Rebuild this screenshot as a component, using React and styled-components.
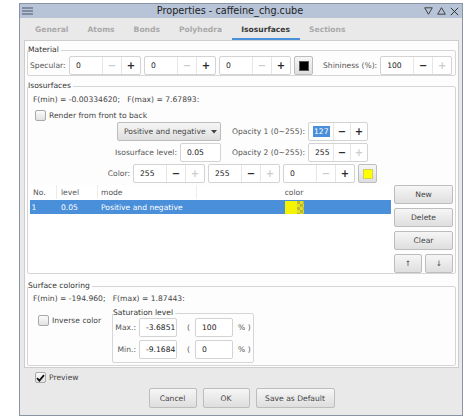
import React from 'react';
import styled, { createGlobalStyle } from 'styled-components';

const GlobalStyle = createGlobalStyle`
  html, body { margin: 0; background: #fff; }
  body {
    font-family: "DejaVu Sans", "Liberation Sans", sans-serif;
    font-size: 7.6px;
    color: #333;
  }
  * { box-sizing: border-box; }
`;

const Page = styled.div`
  padding: 3px 0 0 19px;
`;

const Window = styled.div`
  width: 444px;
  height: 413px;
  border: 1px solid #8a94a5;
  background: #e9e9e9;
  display: flex;
  flex-direction: column;
`;

const TitleBar = styled.div`
  height: 14px;
  background: #b7c3d6;
  display: flex;
  align-items: center;
`;

const MenuIcon = styled.div`
  width: 16px;
  padding-left: 2px;
  display: flex;
  align-items: center;
`;

const Title = styled.div`
  flex: 1;
  text-align: center;
  font-size: 9.7px;
  color: #1e1e1e;
  line-height: 14px;
`;

const TitleButtons = styled.div`
  display: flex;
  align-items: center;
  gap: 4px;
  padding-right: 3px;
`;

const Body = styled.div`
  flex: 1;
  display: flex;
  flex-direction: column;
  padding: 0 3px 0 4px;
`;

const TabBar = styled.div`
  height: 22px;
  display: flex;
  padding-left: 1.5px;
`;

const Tab = styled.div`
  padding: 0 9.5px;
  display: flex;
  align-items: center;
  font-weight: bold;
  color: ${p => (p.$active ? '#3a3a3a' : '#a9a9a9')};
  border-bottom: 2px solid ${p => (p.$active ? '#4a90d9' : 'transparent')};
  padding-top: 2px;
`;

const Pane = styled.div`
  height: 328px;
  border: 1px solid #cdcdcd;
  background: #fdfdfd;
  padding: 4px 2px 0 2px;
`;

const Group = styled.fieldset`
  margin: ${p => p.$top || 0}px 0 0 0;
  padding: 0 0 ${p => p.$bottom || 0}px 0;
  border: 1px solid #d6d6d6;
  border-radius: 2px;
  min-width: 0;
  width: ${p => (p.$width ? p.$width + 'px' : 'auto')};
`;

const Legend = styled.legend`
  padding: 0 2px 0 0;
  line-height: 10px;
  color: #333;
`;

const Row = styled.div`
  display: flex;
  align-items: center;
  height: 19px;
  gap: ${p => p.$gap || 0}px;
  margin: ${p => p.$mt || 0}px 0 0 ${p => p.$ml || 0}px;
`;

const Label = styled.span`
  color: #555;
  white-space: nowrap;
  width: ${p => (p.$width ? p.$width + 'px' : 'auto')};
  text-align: ${p => (p.$right ? 'right' : 'left')};
  margin-left: ${p => p.$ml || 0}px;
  flex-shrink: 0;
`;

const InfoLine = styled.div`
  height: 10px;
  line-height: 10px;
  margin: ${p => p.$mt || 0}px 0 0 5px;
  color: #444;
  white-space: pre;
`;

const Spin = styled.div`
  width: ${p => p.$width}px;
  height: 19px;
  border: 1px solid #d3d3d3;
  border-radius: 2px;
  background: #fff;
  display: flex;
  flex-shrink: 0;
  margin-left: ${p => p.$ml || 0}px;
`;

const SpinField = styled.div`
  flex: 1;
  display: flex;
  align-items: center;
  padding-left: ${p => p.$pad || 6}px;
  color: #222;
`;

const SpinBtn = styled.div`
  width: ${p => p.$w}px;
  border-left: 1px solid #e6e6e6;
  display: flex;
  align-items: center;
  justify-content: center;
  font-size: 10px;
  font-weight: bold;
  color: ${p => (p.$off ? '#cdcdcd' : '#2a2a2a')};
`;

const Selected = styled.span`
  background: #4a8fd9;
  color: #fff;
  padding: 1px 1px;
`;

const LineEdit = styled.div`
  width: ${p => p.$width}px;
  height: 19px;
  border: 1px solid #d3d3d3;
  border-radius: 2px;
  background: #fff;
  display: flex;
  align-items: center;
  padding-left: 6px;
  color: #222;
  flex-shrink: 0;
  margin-left: ${p => p.$ml || 0}px;
`;

const Button = styled.div`
  width: ${p => (p.$width ? p.$width + 'px' : 'auto')};
  height: ${p => p.$height || 19}px;
  border: 1px solid #bdbdbd;
  border-radius: 2px;
  background: linear-gradient(#f6f6f6, #dedede);
  display: flex;
  align-items: center;
  justify-content: ${p => (p.$start ? 'flex-start' : 'center')};
  padding-left: ${p => (p.$start ? 6 : 0)}px;
  color: #444;
  flex-shrink: 0;
`;

const Swatch = styled.div`
  width: 10px;
  height: 10px;
  background: ${p => p.$color};
  border: 1px solid ${p => (p.$color === '#000' ? '#555' : '#d0d060')};
`;

const Caret = styled.svg`
  margin-left: 5px;
`;

const LeftCell = styled.div`
  width: ${p => p.$width}px;
  display: flex;
  align-items: center;
  justify-content: flex-end;
  gap: 3px;
  flex-shrink: 0;
`;

const CheckRow = styled.div`
  display: flex;
  align-items: center;
  gap: 3px;
  height: 11px;
  margin: ${p => p.$mt || 0}px 0 0 ${p => p.$ml || 0}px;
  color: #444;
`;

const Box = styled.div`
  width: 11px;
  height: 11px;
  border: 1px solid #a9a9a9;
  border-radius: 2px;
  background: linear-gradient(#fbfbfb, #e2e2e2);
  display: flex;
  align-items: center;
  justify-content: center;
`;

const TableArea = styled.div`
  display: flex;
  gap: 3px;
  margin: 2px 2px 0 2px;
  height: 88px;
`;

const Table = styled.div`
  flex: 1;
  background: #fff;
`;

const TRow = styled.div`
  display: flex;
  height: 14px;
  background: ${p => (p.$selected ? '#4a8fd9' : 'transparent')};
  color: ${p => (p.$selected ? '#fff' : '#555')};
  margin-bottom: ${p => (p.$selected ? 0 : 1)}px;
`;

const TCell = styled.div`
  width: ${p => (p.$width ? p.$width + 'px' : 'auto')};
  flex: ${p => (p.$width ? 'none' : 1)};
  display: flex;
  align-items: center;
  justify-content: ${p => (p.$center ? 'center' : 'flex-start')};
  padding-left: ${p => (p.$center ? 0 : p.$pad || 3)}px;
  border-right: ${p => (p.$sep ? '1px solid #ececec' : 'none')};
`;

const ColorCell = styled.div`
  width: 19px;
  height: 13px;
  background:
    linear-gradient(90deg, #f4f400 0 62%, transparent 62%),
    repeating-conic-gradient(#e0e020 0 25%, #b8b840 0 50%) 0 0 / 6px 6px;
`;

const SideButtons = styled.div`
  width: 59px;
  display: flex;
  flex-direction: column;
  gap: 4px;
`;

const ArrowRow = styled.div`
  display: flex;
  gap: 3px;
`;

const SurfaceRow = styled.div`
  display: flex;
`;

const InverseCol = styled.div`
  width: 84px;
  padding-top: 11px;
`;

const Paren = styled.span`
  width: 18px;
  text-align: right;
  padding-right: 5px;
  color: #555;
`;

const Footer = styled.div`
  display: flex;
  justify-content: center;
  gap: 6px;
  margin-top: 5px;
`;

const Check = () => (
  <svg width="9" height="8" viewBox="0 0 9 8">
    <path d="M1 4.2 L3.4 6.6 L8 1.2" fill="none" stroke="#111" strokeWidth="1.8" />
  </svg>
);

const SpinBox = ({ value, width = 72, btn = 19, minusOff, plusOff, selected, ml }) => (
  <Spin $width={width} $ml={ml}>
    <SpinField $pad={selected ? 4 : 6}>{selected ? <Selected>{value}</Selected> : value}</SpinField>
    <SpinBtn $w={btn} $off={minusOff}>−</SpinBtn>
    <SpinBtn $w={btn} $off={plusOff}>+</SpinBtn>
  </Spin>
);

const tabs = ['General', 'Atoms', 'Bonds', 'Polyhedra', 'Isosurfaces', 'Sections'];

export default function App() {
  return (
    <Page>
      <GlobalStyle />
      <Window>
        <TitleBar>
          <MenuIcon>
            <svg width="11" height="8" viewBox="0 0 11 8">
              <path d="M0 1h11M0 4h11M0 7h11" stroke="#4b5566" strokeWidth="1" />
            </svg>
          </MenuIcon>
          <Title>Properties - caffeine_chg.cube</Title>
          <TitleButtons>
            <svg width="9" height="8" viewBox="0 0 9 8">
              <path d="M0.7 0.8 H8.3 L4.5 7.3 Z" fill="none" stroke="#333" strokeWidth="0.9" />
            </svg>
            <svg width="9" height="8" viewBox="0 0 9 8">
              <path d="M0.7 7.2 H8.3 L4.5 0.7 Z" fill="none" stroke="#333" strokeWidth="0.9" />
            </svg>
            <svg width="9" height="9" viewBox="0 0 9 9">
              <path d="M0.8 0.8 L8.2 8.2 M8.2 0.8 L0.8 8.2" stroke="#333" strokeWidth="1" />
            </svg>
          </TitleButtons>
        </TitleBar>
        <Body>
          <TabBar>
            {tabs.map(t => (
              <Tab key={t} $active={t === 'Isosurfaces'}>{t}</Tab>
            ))}
          </TabBar>
          <Pane>
            <Group>
              <Legend>Material</Legend>
              <Row $mt={1} $ml={2} $gap={3}>
                <Label $width={36}>Specular:</Label>
                <SpinBox value="0" minusOff />
                <SpinBox value="0" minusOff />
                <SpinBox value="0" minusOff />
                <Button $width={19}><Swatch $color="#000" /></Button>
                <Label $ml={7}>Shininess (%):</Label>
                <SpinBox value="100" plusOff />
              </Row>
            </Group>

            <Group $top={5}>
              <Legend>Isosurfaces</Legend>
              <InfoLine $mt={4}>{'F(min) = -0.00334620;   F(max) = 7.67893:'}</InfoLine>
              <CheckRow $mt={5} $ml={7}>
                <Box />
                <span>Render from front to back</span>
              </CheckRow>
              <Row $mt={1}>
                <LeftCell $width={193}>
                  <Button $width={104} $start>
                    Positive and negative
                    <Caret width="6" height="4" viewBox="0 0 6 4">
                      <path d="M0 0 H6 L3 3.5 Z" fill="#444" />
                    </Caret>
                  </Button>
                </LeftCell>
                <Label $width={84} $right>Opacity 1 (0~255):</Label>
                <SpinBox value="127" width={60} btn={17} selected ml={3} />
              </Row>
              <Row $mt={2}>
                <LeftCell $width={193}>
                  <Label>Isosurface level:</Label>
                  <LineEdit $width={41}>0.05</LineEdit>
                </LeftCell>
                <Label $width={84} $right>Opacity 2 (0~255):</Label>
                <SpinBox value="255" width={60} btn={17} plusOff ml={3} />
              </Row>
              <Row $mt={2} $gap={3}>
                <Label $width={102} $right>Color:</Label>
                <SpinBox value="255" plusOff />
                <SpinBox value="255" plusOff />
                <SpinBox value="0" minusOff />
                <Button $width={19}><Swatch $color="#ffff00" /></Button>
              </Row>
              <TableArea>
                <Table>
                  <TRow>
                    <TCell $width={27} $sep>No.</TCell>
                    <TCell $width={41} $sep $pad={4}>level</TCell>
                    <TCell $width={99} $sep>mode</TCell>
                    <TCell $center>color</TCell>
                  </TRow>
                  <TRow $selected>
                    <TCell $width={27} $pad={1.5}>1</TCell>
                    <TCell $width={41} $pad={4}>0.05</TCell>
                    <TCell $width={99}>Positive and negative</TCell>
                    <TCell $center><ColorCell /></TCell>
                  </TRow>
                </Table>
                <SideButtons>
                  <Button>New</Button>
                  <Button>Delete</Button>
                  <Button>Clear</Button>
                  <ArrowRow>
                    <Button $width={28}>↑</Button>
                    <Button $width={28}>↓</Button>
                  </ArrowRow>
                </SideButtons>
              </TableArea>
            </Group>

            <Group $top={7} $bottom={2}>
              <Legend>Surface coloring</Legend>
              <InfoLine $mt={3}>{'F(min) = -194.960;   F(max) = 1.87443:'}</InfoLine>
              <SurfaceRow>
                <InverseCol>
                  <CheckRow $ml={10}>
                    <Box />
                    <span>Inverse color</span>
                  </CheckRow>
                </InverseCol>
                <Group $top={4} $width={142} $bottom={3}>
                  <Legend>Saturation level</Legend>
                  <Row>
                    <Label $width={23} $right>Max.:</Label>
                    <LineEdit $width={38} $ml={3}>-3.6851</LineEdit>
                    <Paren>(</Paren>
                    <LineEdit $width={38}>100</LineEdit>
                    <Label $ml={5}>% )</Label>
                  </Row>
                  <Row $mt={3}>
                    <Label $width={23} $right>Min.:</Label>
                    <LineEdit $width={38} $ml={3}>-9.1684</LineEdit>
                    <Paren>(</Paren>
                    <LineEdit $width={38}>0</LineEdit>
                    <Label $ml={5}>% )</Label>
                  </Row>
                </Group>
              </SurfaceRow>
            </Group>
          </Pane>
          <CheckRow $mt={4} $ml={11}>
            <Box><Check /></Box>
            <span>Preview</span>
          </CheckRow>
          <Footer>
            <Button $width={48} $height={20}>Cancel</Button>
            <Button $width={47} $height={20}>OK</Button>
            <Button $width={79} $height={20}>Save as Default</Button>
          </Footer>
        </Body>
      </Window>
    </Page>
  );
}
